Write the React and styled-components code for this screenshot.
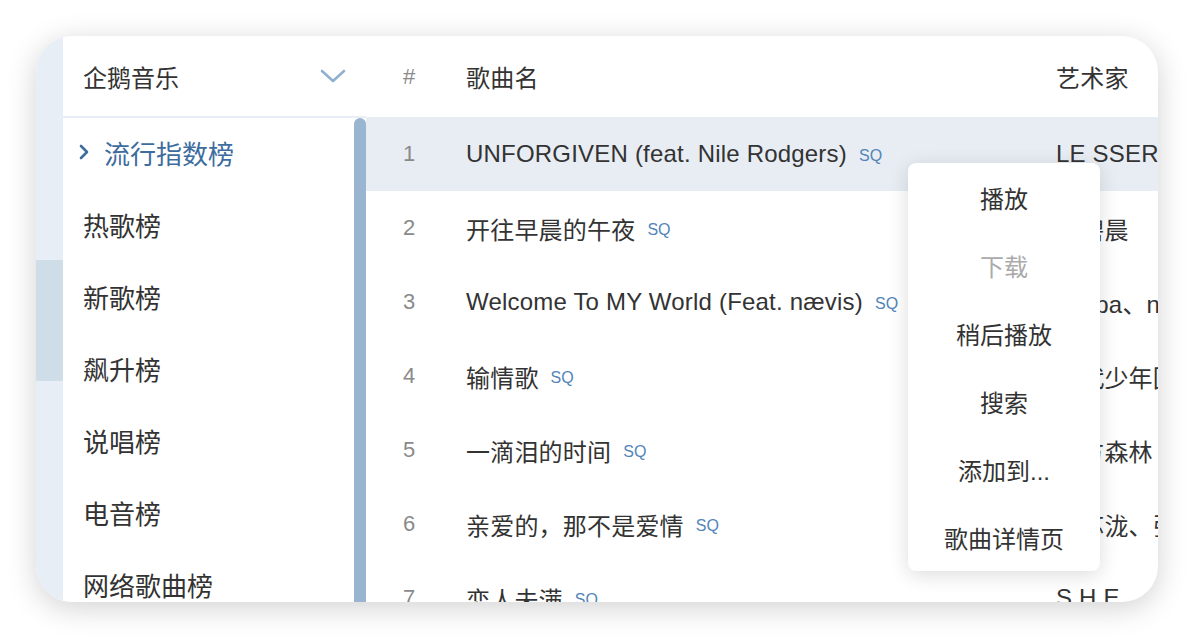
import styled, { createGlobalStyle } from "styled-components";

const GlobalStyle = createGlobalStyle`
  html, body {
    margin: 0;
    padding: 0;
    background: #fff;
  }
  body {
    font-family: "Liberation Sans", "Noto Sans CJK SC", sans-serif;
    color: #333;
  }
`;

const Page = styled.div`
  padding: 36px;
  height: 638px;
  box-sizing: border-box;
`;

const Window = styled.div`
  position: relative;
  display: flex;
  height: 566px;
  border-radius: 36px;
  overflow: hidden;
  background: #fff;
  box-shadow: 0 6px 30px rgba(0, 0, 0, 0.18);
`;

const Rail = styled.div`
  width: 27px;
  flex-shrink: 0;
  display: flex;
  flex-direction: column;
  background: #e8eef6;
`;

const RailBlock = styled.div`
  height: ${(p) => p.$h}px;
  background: ${(p) => (p.$active ? "#cfdde9" : "transparent")};
`;

const Sidebar = styled.div`
  width: 303px;
  flex-shrink: 0;
  display: flex;
  flex-direction: column;
  background: #fff;
`;

const SideHeader = styled.div`
  height: 80px;
  display: flex;
  align-items: center;
  justify-content: space-between;
  padding: 0 20px 0 20px;
  border-bottom: 2px solid #e8eef5;
  font-size: 24px;
  color: #333;
`;

const SideBody = styled.div`
  flex: 1;
  display: flex;
  min-height: 0;
`;

const SideList = styled.ul`
  flex: 1;
  margin: 0;
  padding: 0;
  list-style: none;
`;

const SideItem = styled.li`
  height: 72px;
  box-sizing: border-box;
  padding-bottom: 4px;
  display: flex;
  align-items: center;
  gap: 14px;
  padding-left: ${(p) => (p.$active ? "15px" : "20px")};
  font-size: 26px;
  color: ${(p) => (p.$active ? "#3d6c9e" : "#333")};
  white-space: nowrap;
`;

const Thumb = styled.div`
  width: 12px;
  background: #9ab5cf;
  border-radius: 6px 6px 0 0;
`;

const Table = styled.div`
  flex: 1;
  min-width: 0;
  display: flex;
  flex-direction: column;
`;

const Row = styled.div`
  display: grid;
  grid-template-columns: 86px 604px 1fr;
  align-items: center;
  height: ${(p) => (p.$head ? "81px" : "74px")};
  flex-shrink: 0;
  background: ${(p) => (p.$selected ? "#e8edf4" : "transparent")};
  font-size: 24px;
  letter-spacing: 0.2px;
  white-space: nowrap;
`;

const Num = styled.div`
  text-align: center;
  font-size: 22px;
  letter-spacing: 0;
  color: #8a8a8a;
`;

const Title = styled.div`
  padding-left: 14px;
  display: flex;
  align-items: center;
  color: #333;
`;

const Badge = styled.span`
  display: inline-block;
  margin-left: 12px;
  padding-top: 3px;
  font-size: 16px;
  letter-spacing: 0;
  color: #5285b8;
`;

const Artist = styled.div`
  color: #333;
  overflow: hidden;
`;

const Menu = styled.ul`
  position: absolute;
  left: 872px;
  top: 127px;
  width: 192px;
  margin: 0;
  padding: 0;
  list-style: none;
  background: #fff;
  border-radius: 8px;
  box-shadow: 0 4px 20px rgba(0, 0, 0, 0.14);
`;

const MenuItem = styled.li`
  height: 68px;
  display: flex;
  align-items: center;
  justify-content: center;
  font-size: 24px;
  color: ${(p) => (p.$disabled ? "#aaa" : "#333")};
`;

const ChevronDown = () => (
  <svg width="26" height="16" viewBox="0 0 26 16">
    <polyline
      points="2,3 13,13 24,3"
      fill="none"
      stroke="#8fb0cf"
      strokeWidth="2.6"
      strokeLinecap="round"
      strokeLinejoin="round"
    />
  </svg>
);

const ChevronRight = () => (
  <svg width="12" height="16" viewBox="0 0 12 16">
    <polyline
      points="3,2 9,8 3,14"
      fill="none"
      stroke="#3d6c9e"
      strokeWidth="2.6"
      strokeLinecap="round"
      strokeLinejoin="round"
    />
  </svg>
);

const charts = ["流行指数榜", "热歌榜", "新歌榜", "飙升榜", "说唱榜", "电音榜", "网络歌曲榜"];

const songs = [
  { title: "UNFORGIVEN (feat. Nile Rodgers)", artist: "LE SSERAFIM" },
  { title: "开往早晨的午夜", artist: "张碧晨" },
  { title: "Welcome To MY World (Feat. nævis)", artist: "aespa、nævis" },
  { title: "输情歌", artist: "时代少年团" },
  { title: "一滴泪的时间", artist: "南方森林" },
  { title: "亲爱的，那不是爱情", artist: "汪苏泷、张碧晨" },
  { title: "恋人未满", artist: "S.H.E" },
];

const menu = ["播放", "下载", "稍后播放", "搜索", "添加到...", "歌曲详情页"];

const App = () => {
  return (
    <>
      <GlobalStyle />
      <Page>
        <Window>
          <Rail>
            <RailBlock $h={224} />
            <RailBlock $h={121} $active />
          </Rail>
          <Sidebar>
            <SideHeader>
              企鹅音乐
              <ChevronDown />
            </SideHeader>
            <SideBody>
              <SideList>
                {charts.map((c, i) => (
                  <SideItem key={c} $active={i === 0}>
                    {i === 0 && <ChevronRight />}
                    {c}
                  </SideItem>
                ))}
              </SideList>
              <Thumb />
            </SideBody>
          </Sidebar>
          <Table>
            <Row $head>
              <Num>#</Num>
              <Title>歌曲名</Title>
              <Artist>艺术家</Artist>
            </Row>
            {songs.map((s, i) => (
              <Row key={s.title} $selected={i === 0}>
                <Num>{i + 1}</Num>
                <Title>
                  {s.title}
                  <Badge>SQ</Badge>
                </Title>
                <Artist>{s.artist}</Artist>
              </Row>
            ))}
          </Table>
          <Menu>
            {menu.map((m) => (
              <MenuItem key={m} $disabled={m === "下载"}>
                {m}
              </MenuItem>
            ))}
          </Menu>
        </Window>
      </Page>
    </>
  );
};

export default App;
